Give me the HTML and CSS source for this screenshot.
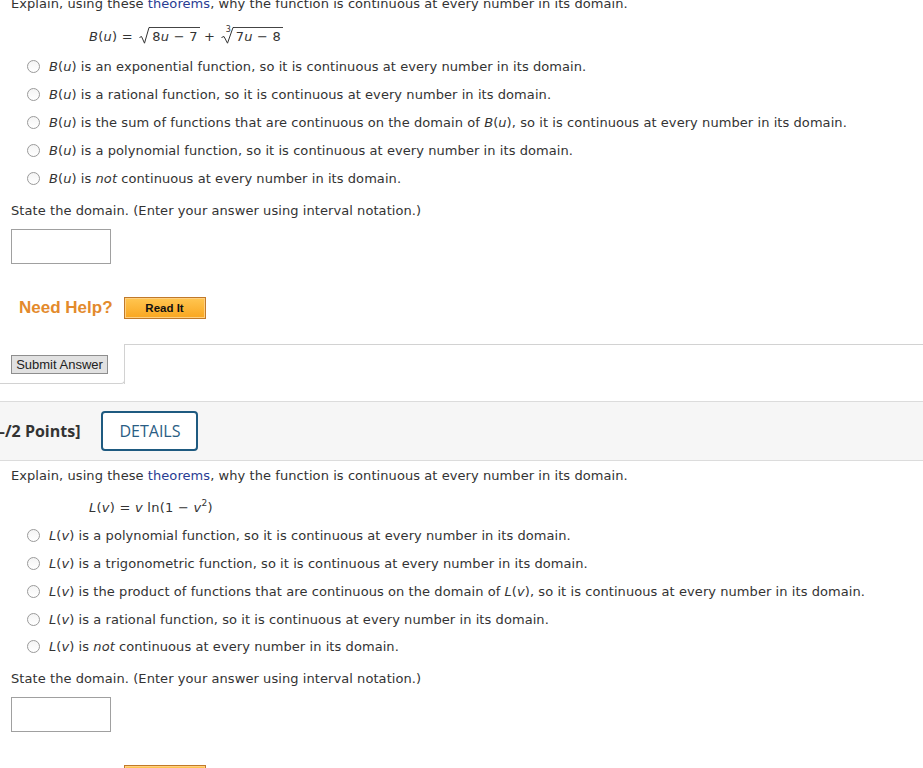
FILE: index.html
```html
<!DOCTYPE html>
<html>
<head>
<meta charset="utf-8">
<link rel="stylesheet" href="styles.css">
</head>
<body>
<div class="q q-first">
  <p class="explain">Explain, using these <a class="link" href="#">theorems</a>, why the function is continuous at every number in its domain.</p>
  <div class="formula"><i>B</i>(<i>u</i>) = <span class="root"><svg class="rad" width="11" height="17" viewBox="0 0 11 17"><path d="M0.5 10.5 L2.5 9.5 L5.5 16.2 L10 0.5 L11 0.5" fill="none" stroke="#333" stroke-width="1"/></svg><span class="radicand">8<i>u</i> − 7</span></span> + <span class="root root-cube"><span class="index">3</span><svg class="rad" width="13" height="17" viewBox="0 0 13 17"><path d="M0.5 10.5 L3 9.5 L6.5 16.2 L12 0.5 L13 0.5" fill="none" stroke="#333" stroke-width="1"/></svg><span class="radicand">7<i>u</i> − 8</span></span></div>
  <ul class="options">
    <li><span class="radio"></span><span><i>B</i>(<i>u</i>) is an exponential function, so it is continuous at every number in its domain.</span></li>
    <li><span class="radio"></span><span><i>B</i>(<i>u</i>) is a rational function, so it is continuous at every number in its domain.</span></li>
    <li><span class="radio"></span><span><i>B</i>(<i>u</i>) is the sum of functions that are continuous on the domain of <i>B</i>(<i>u</i>), so it is continuous at every number in its domain.</span></li>
    <li><span class="radio"></span><span><i>B</i>(<i>u</i>) is a polynomial function, so it is continuous at every number in its domain.</span></li>
    <li><span class="radio"></span><span><i>B</i>(<i>u</i>) is <i>not</i> continuous at every number in its domain.</span></li>
  </ul>
  <p class="state">State the domain. (Enter your answer using interval notation.)</p>
  <div class="answer"></div>
  <div class="help">
    <span class="help-label">Need Help?</span>
    <span class="read-it">Read It</span>
  </div>
</div>
<div class="submit-row">
  <div class="submit-cell"><span class="submit-btn">Submit Answer</span></div>
  <div class="submit-rest"></div>
</div>
<div class="band">
  <span class="points">–/2 Points]</span>
  <span class="details">DETAILS</span>
</div>
<div class="q q-second">
  <p class="explain">Explain, using these <a class="link" href="#">theorems</a>, why the function is continuous at every number in its domain.</p>
  <div class="formula"><i>L</i>(<i>v</i>) = <i>v</i> ln(1 − <i>v</i><sup class="sq">2</sup>)</div>
  <ul class="options">
    <li><span class="radio"></span><span><i>L</i>(<i>v</i>) is a polynomial function, so it is continuous at every number in its domain.</span></li>
    <li><span class="radio"></span><span><i>L</i>(<i>v</i>) is a trigonometric function, so it is continuous at every number in its domain.</span></li>
    <li><span class="radio"></span><span><i>L</i>(<i>v</i>) is the product of functions that are continuous on the domain of <i>L</i>(<i>v</i>), so it is continuous at every number in its domain.</span></li>
    <li><span class="radio"></span><span><i>L</i>(<i>v</i>) is a rational function, so it is continuous at every number in its domain.</span></li>
    <li><span class="radio"></span><span><i>L</i>(<i>v</i>) is <i>not</i> continuous at every number in its domain.</span></li>
  </ul>
  <p class="state">State the domain. (Enter your answer using interval notation.)</p>
  <div class="answer"></div>
  <div class="help">
    <span class="help-label">Need Help?</span>
    <span class="read-it">Read It</span>
  </div>
</div>
</body>
</html>
```

FILE: styles.css
```css
html, body {
  margin: 0;
  padding: 0;
  background: #fff;
}
body {
  font-family: "DejaVu Sans", Verdana, sans-serif;
  font-size: 13px;
  color: #333;
  overflow: hidden;
  height: 768px;
  letter-spacing: 0.07px;
}
.q {
  padding: 0 11px;
}
.explain {
  margin: 0;
  line-height: 16px;
  white-space: nowrap;
}
.q-first .explain { margin-top: -4px; }
.q-second .explain { margin-top: 7px; }
.link {
  color: #283c93;
  text-decoration: none;
}
.formula {
  margin-left: 78px;
  line-height: 24px;
  height: 24px;
  padding-top: 13px;
  white-space: nowrap;
  letter-spacing: 0.25px;
}
.q-second .formula { padding-top: 12px; }
.root {
  display: inline-block;
  position: relative;
  line-height: 18px;
  margin-left: 2px;
}
.root-cube {
  margin-left: 1px;
}
.rad {
  vertical-align: -3px;
  margin-right: 1px;
}
.radicand {
  display: inline-block;
  border-top: 1px solid #444;
  line-height: 17px;
  padding: 0 2px 0 2px;
  margin-left: -1px;
}
.index {
  position: absolute;
  font-size: 8px;
  left: 5px;
  top: -2px;
  line-height: 10px;
  letter-spacing: 0;
}
.sq {
  font-size: 9px;
  line-height: 0;
  vertical-align: 6px;
}
.options {
  list-style: none;
  margin: 3px 0 0 0;
  padding: 0;
}
.q-second .options { margin-top: 2px; }
.options li {
  display: flex;
  align-items: center;
  height: 28px;
  padding-left: 16px;
  white-space: nowrap;
}
.q-second .options li { height: 27.75px; }
.radio {
  width: 11px;
  height: 11px;
  border: 1px solid #9a9a9a;
  border-radius: 50%;
  background: linear-gradient(#f4f4f4, #ffffff);
  margin-right: 9px;
  flex: none;
}
.state {
  margin: 11px 0 0 0;
  line-height: 16px;
}
.q-second .state { margin-top: 10px; }
.answer {
  margin-top: 10px;
  width: 98px;
  height: 33px;
  border: 1px solid #a0a0a0;
  background: #fff;
}
.help {
  display: flex;
  align-items: center;
  margin-top: 33px;
  padding-left: 8px;
  height: 22px;
}
.help-label {
  font-family: "Liberation Sans", Arial, sans-serif;
  font-weight: bold;
  font-size: 17px;
  color: #e38a2c;
  margin-right: 11px;
  letter-spacing: 0;
}
.read-it {
  display: flex;
  align-items: center;
  justify-content: center;
  width: 80px;
  height: 20px;
  border: 1px solid #c0792a;
  box-shadow: inset 0 0 0 1px #ffd080;
  background: linear-gradient(#ffc651, #f9a620);
  font-family: "Liberation Sans", Arial, sans-serif;
  font-weight: bold;
  font-size: 11.5px;
  color: #111;
  letter-spacing: 0;
}
.submit-row {
  display: flex;
  margin-top: 25px;
}
.submit-cell {
  height: 39px;
  border-right: 1px solid #d2d2d2;
  border-bottom: 1px solid #d2d2d2;
  border-bottom-right-radius: 4px;
  display: flex;
  align-items: center;
  padding-left: 11px;
  margin-right: -1px;
  width: 113px;
}
.submit-btn {
  display: inline-block;
  font-family: "Liberation Sans", Arial, sans-serif;
  font-size: 13px;
  color: #222;
  background: #e1e1e1;
  border: 1px solid #8e8e8e;
  height: 17px;
  line-height: 17px;
  width: 95px;
  text-align: center;
  margin-top: 2px;
  letter-spacing: 0;
}
.submit-rest {
  flex: 1;
  border-top: 1px solid #d2d2d2;
  border-left: 1px solid #d2d2d2;
}
.band {
  margin-top: 17px;
  height: 58px;
  background: #f6f6f6;
  border-top: 1px solid #dcdcdc;
  border-bottom: 1px solid #dcdcdc;
  display: flex;
  align-items: center;
}
.points {
  font-family: "Open Sans", sans-serif;
  font-weight: bold;
  font-size: 16px;
  color: #333;
  margin-left: -3px;
  margin-right: 21px;
  letter-spacing: 0;
}
.details {
  display: flex;
  align-items: center;
  justify-content: center;
  width: 93px;
  height: 36px;
  border: 2px solid #1e5a80;
  border-radius: 4px;
  background: #fff;
  font-family: "Open Sans", sans-serif;
  font-size: 16px;
  color: #2a5d84;
  letter-spacing: 0;
}
```
